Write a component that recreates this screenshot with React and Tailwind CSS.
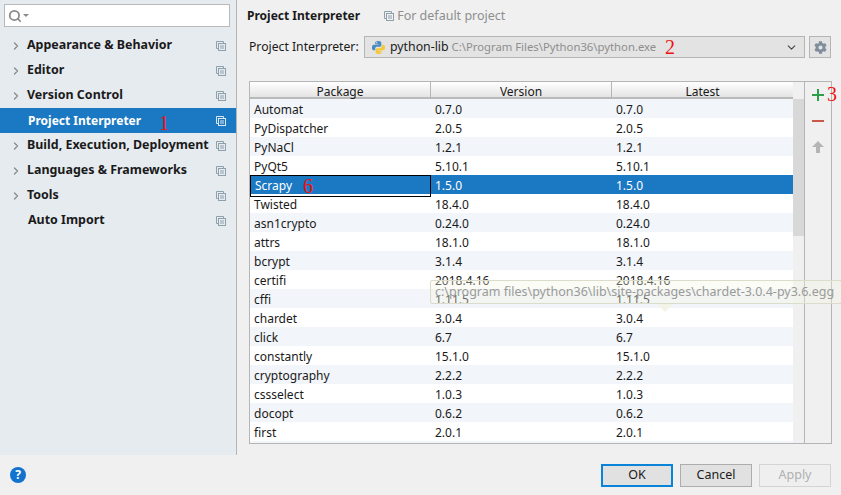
import { ChevronRight, ChevronDown, Search } from "lucide-react";
import { FaCog } from "react-icons/fa";

const SIDEBAR = [
  { name: "Appearance & Behavior", arrow: true },
  { name: "Editor", arrow: true },
  { name: "Version Control", arrow: true },
  { name: "Project Interpreter", selected: true },
  { name: "Build, Execution, Deployment", arrow: true },
  { name: "Languages & Frameworks", arrow: true },
  { name: "Tools", arrow: true },
  { name: "Auto Import" },
];

const PACKAGES = [
  ["Automat", "0.7.0"],
  ["PyDispatcher", "2.0.5"],
  ["PyNaCl", "1.2.1"],
  ["PyQt5", "5.10.1"],
  ["Scrapy", "1.5.0"],
  ["Twisted", "18.4.0"],
  ["asn1crypto", "0.24.0"],
  ["attrs", "18.1.0"],
  ["bcrypt", "3.1.4"],
  ["certifi", "2018.4.16"],
  ["cffi", "1.11.5"],
  ["chardet", "3.0.4"],
  ["click", "6.7"],
  ["constantly", "15.1.0"],
  ["cryptography", "2.2.2"],
  ["cssselect", "1.0.3"],
  ["docopt", "0.6.2"],
  ["first", "2.0.1"],
];

function CopyIcon({ light }) {
  const c = light ? "#dbe7f3" : "#8fa0ad";
  return (
    <svg width="10" height="10" viewBox="0 0 10 10" fill="none" stroke={c} strokeWidth="1">
      <path d="M2.500 7.500h-2v-7h7v2" />
      <rect x="2.500" y="2.500" width="7" height="7" />
      <path d="M4 5h4M4 7h4" />
    </svg>
  );
}

function PythonIcon() {
  return (
    <svg width="15" height="15" viewBox="0 0 16 16">
      <path fill="#4b8bbe" d="M8 1C5.500 1 4.500 1.800 4.500 3v1.500H8V5H3C1.600 5 1 6.300 1 8s.6 3 2 3h1.500V9.300C4.500 8 5.500 7.300 6.600 7.300h2.800c1 0 1.600-.7 1.600-1.600V3c0-1.200-1.200-2-3-2zM6 2.200a.7.700 0 110 1.400.7.700 0 010-1.400z" />
      <path fill="#f5c83c" d="M8 15c2.500 0 3.500-.8 3.500-2v-1.500H8V11h5c1.400 0 2-1.300 2-3s-.6-3-2-3h-1.500v1.700c0 1.300-1 2-2.100 2H6.600C5.600 8.700 5 9.400 5 10.300V13c0 1.200 1.200 2 3 2zm2-1.200a.7.700 0 110-1.400.7.700 0 010 1.400z" />
    </svg>
  );
}

function Sidebar() {
  return (
    <aside className="w-[237px] shrink-0 bg-[#e6ebf0] border-r border-[#b5b5b5] pt-1">
      <div className="mx-1 w-[226px] h-[23px] bg-white border border-[#b9b9b9] flex items-center pl-[3px] text-[#8a8a8a]">
        <Search size={14} strokeWidth={3} />
        <span className="ml-[1px] border-x-[3px] border-t-[3px] border-x-transparent border-t-[#8a8a8a]" />
      </div>
      <div className="mt-[6px]">
        {SIDEBAR.map((item) => (
          <div
            key={item.name}
            className={`h-[25px] flex items-center pr-[10px] ${item.selected ? "bg-[#1b78c2] text-white" : "text-[#1a1a1a]"}`}
          >
            <span className="w-[27px] pl-[10px] shrink-0 text-[#8a8a8a]">
              {item.arrow && <ChevronRight size={12} strokeWidth={2.6} />}
            </span>
            <span className={`flex-1 font-bold whitespace-nowrap ${item.selected ? "text-[12px]" : "text-[12.45px]"} ${item.arrow ? "" : "pl-[1px]"}`}>{item.name}</span>
            <CopyIcon light={item.selected} />
          </div>
        ))}
      </div>
    </aside>
  );
}

function PackageTable() {
  return (
    <div className="flex h-[363px] w-[583px] ml-[12px] mt-[23px]">
      <div className="w-[555px] h-full border border-[#b5b5b5] border-r-0 bg-white flex flex-col overflow-hidden">
        <div className="flex shrink-0">
          <div className="w-[543px] h-[17px] grid grid-cols-[181px_181px_181px] bg-gradient-to-b from-white to-[#e4e4e4] border-b-2 border-[#b9b9b9] text-[12px] text-[#1a1a1a] leading-[19px] text-center">
            <div className="border-r border-[#b5b5b5]">Package</div>
            <div className="border-r border-[#b5b5b5]">Version</div>
            <div>Latest</div>
          </div>
          <div className="flex-1 bg-[#f0f0f0]" />
        </div>
        <div className="flex flex-1 min-h-0">
          <div className="w-[543px] bg-[#f2f5f9]">
            {PACKAGES.map(([name, version], i) => {
              const selected = name === "Scrapy";
              return (
                <div
                  key={name}
                  className={`h-[19px] grid grid-cols-[181px_181px_181px] text-[12px] leading-[22px] ${selected ? "bg-[#1b78c2] text-white" : i % 2 ? "bg-white text-[#1a1a1a]" : "bg-[#f2f5f9] text-[#1a1a1a]"}`}
                >
                  <div className={`pl-[4px] ${selected ? "border border-black leading-[20px] pl-[3px]" : ""}`}>{name}</div>
                  <div className="pl-[4px]">{version}</div>
                  <div className="pl-[4px]">{version}</div>
                </div>
              );
            })}
          </div>
          <div className="flex-1 bg-[#f0f0f0]">
            <div className="h-[137px] bg-[#d8d8d8]" />
          </div>
        </div>
      </div>
      <div className="w-[28px] h-full border border-[#b5b5b5] flex flex-col items-center pt-[7px] gap-[14px]">
        <svg width="12" height="12" viewBox="0 0 12 12"><path d="M6 0v12M0 6h12" stroke="#2e9e48" strokeWidth="2" /></svg>
        <svg width="12" height="12" viewBox="0 0 12 12"><path d="M0 6h12" stroke="#c9584a" strokeWidth="2" /></svg>
        <svg width="12" height="12" viewBox="0 0 12 12"><path d="M6 0l6 6H8v6H4V6H0z" fill="#b5b5b5" /></svg>
      </div>
    </div>
  );
}

function Tooltip() {
  return (
    <div className="absolute left-[430px] top-[280px] w-[412px] h-[24px] rounded-[2px] border border-[#dcdccb] bg-[#f5f5e6]/35 text-[12.5px] leading-[22px] text-[#9a9a9a] pl-[4px] whitespace-nowrap">
      c:\program files\python36\lib\site-packages\chardet-3.0.4-py3.6.egg
      <span className="absolute left-[226px] top-[23px] border-x-[8px] border-t-[8px] border-x-transparent border-t-[#f3f3e6]" />
    </div>
  );
}

function Note({ className, children }) {
  return <span className={`absolute text-[#f01010] text-[20px] leading-none font-['Liberation_Serif',serif] ${className}`}>{children}</span>;
}

export default function App() {
  return (
    <div className="relative w-[841px] h-[495px] overflow-hidden bg-[#f0f0f0] font-['Noto_Sans',sans-serif] text-[#1a1a1a] flex flex-col">
      <div className="flex h-[455px]">
        <Sidebar />
        <main className="flex-1 pt-[8px] relative">
          <div className="flex items-center h-[16px] pl-[10px]">
            <span className="text-[12px] font-bold">Project Interpreter</span>
            <span className="ml-[24px] mr-[3px]"><CopyIcon /></span>
            <span className="text-[12.5px] text-[#8e8e8e]">For default project</span>
          </div>
          <div className="flex items-center h-[22px] mt-[12px] pl-[12px]">
            <span className="w-[115px] text-[12.2px] whitespace-nowrap">Project Interpreter:</span>
            <div className="w-[441px] h-[22px] bg-[#e3e3e3] border border-[#b5b5b5] flex items-center pl-[6px] pr-[6px]">
              <PythonIcon />
              <span className="ml-[4px] text-[12.3px]">python-lib</span>
              <span className="ml-[3px] text-[11.3px] text-[#8e8e8e] whitespace-nowrap flex-1">C:\Program Files\Python36\python.exe</span>
              <ChevronDown size={13} className="text-[#444]" />
            </div>
            <div className="ml-[4px] w-[22px] h-[22px] bg-[#e3e3e3] border border-[#b5b5b5] flex items-center justify-center text-[#7f8e9b]">
              <FaCog size={13} />
            </div>
          </div>
          <PackageTable />
        </main>
      </div>
      <footer className="flex-1 flex items-center pl-[10px] pr-[10px]">
        <div className="w-[16px] h-[16px] rounded-full bg-[#1273cf] text-white text-[12px] font-bold flex items-center justify-center">?</div>
        <div className="ml-auto flex gap-[7px] text-[12.5px]">
          <button className="w-[72px] h-[23px] bg-[#e1e1e1] border-2 border-[#0a84d8]">OK</button>
          <button className="w-[72px] h-[23px] bg-[#e1e1e1] border border-[#adadad]">Cancel</button>
          <button className="w-[72px] h-[23px] bg-[#efefef] border border-[#d4d4d4] text-[#b0b0b0]">Apply</button>
        </div>
      </footer>
      <Tooltip />
      <Note className="left-[159px] top-[113px]">1</Note>
      <Note className="left-[665px] top-[37px]">2</Note>
      <Note className="left-[827px] top-[84px]">3</Note>
      <Note className="left-[303px] top-[176px]">6</Note>
    </div>
  );
}
